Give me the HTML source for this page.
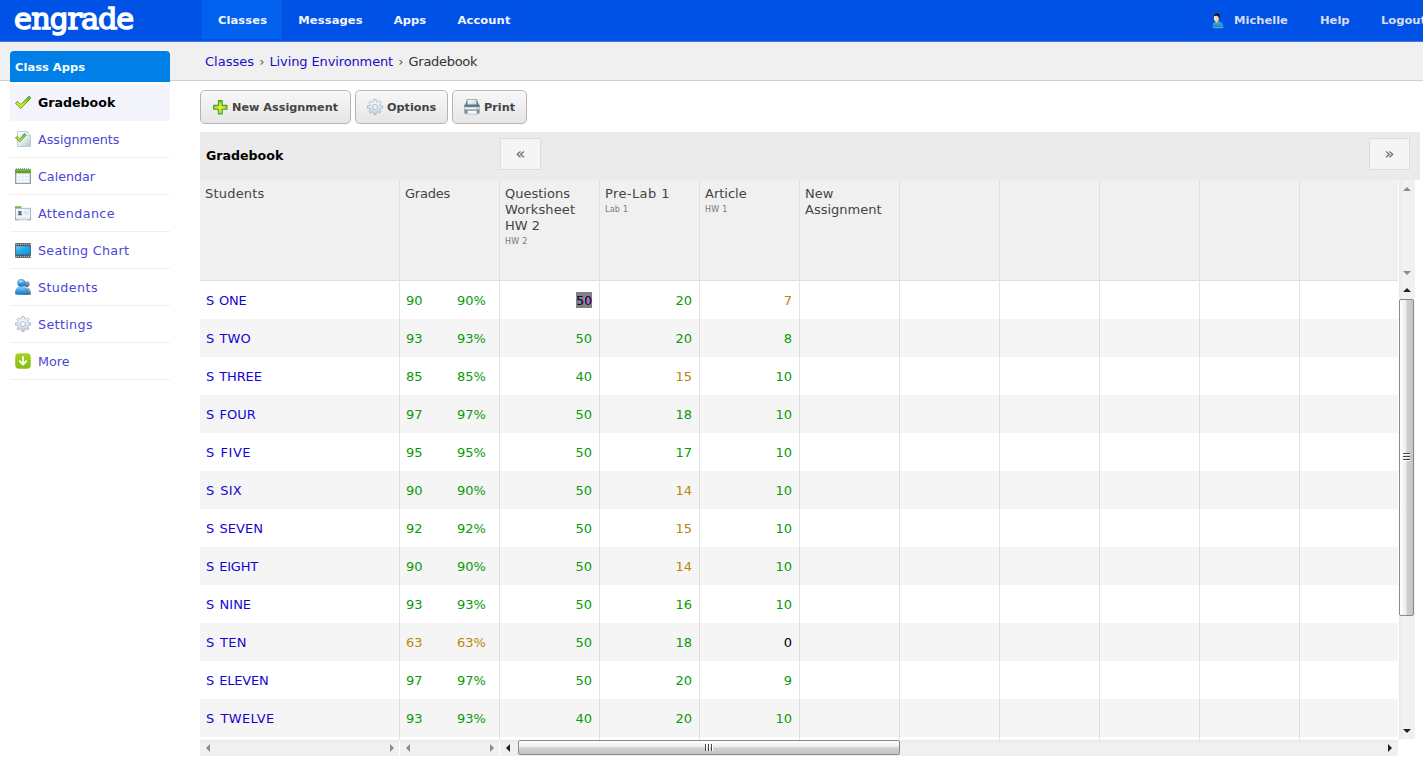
<!DOCTYPE html>
<html><head><meta charset="utf-8"><title>Engrade Gradebook</title>
<style>
*{box-sizing:border-box;margin:0;padding:0}
html,body{width:1423px;height:768px;overflow:hidden;background:#fff}
body{font-family:"DejaVu Sans","Liberation Sans",sans-serif;font-size:13px;color:#333;position:relative}
a{text-decoration:none;color:#1a0dc8}
#hdr{position:absolute;left:0;top:0;width:1423px;height:41px;background:#0052e6;border-bottom:0}
#hdrline{position:absolute;left:0;top:41px;width:1423px;height:1px;background:#3d79e8}
#logo{position:absolute;left:14px;top:-1px;font-weight:normal;font-size:27.5px;letter-spacing:-0.5px;-webkit-text-stroke:1.400px #fff;color:#fff;line-height:41px;white-space:nowrap;transform:scaleX(1.05);transform-origin:0 50%}
#logo b{font:normal 29px 'DejaVu Serif','Liberation Serif',serif;-webkit-text-stroke:1.300px #fff;letter-spacing:-1.1px}
.nav{position:absolute;top:0;height:41px;line-height:41px;color:#f4f6ff;font-weight:bold;font-size:11.5px;letter-spacing:.1px;padding-left:1px;text-align:center;border-right:1px solid #0b4ed8;background:transparent}
.nav.act{background:linear-gradient(#0260ee 0,#0260ee 39px,#0052e6 39px)}
.navr{position:absolute;top:0;height:41px;line-height:41px;color:#d8dcf6;font-weight:bold;font-size:11.5px;border-left:1px solid #0b4ed8;white-space:nowrap}
#crumb{position:absolute;left:0;top:42px;width:1423px;height:39px;background:#f0f0f0;border-bottom:1px solid #cfcfcf}
#crumb .t{position:absolute;left:205px;top:1px;line-height:38px;font-size:13px;color:#333;white-space:nowrap}
#crumb .t i{font-style:normal;color:#555;padding:0 1px}
#side{position:absolute;left:10px;top:51px;width:160px}
#side .hd{height:31px;margin-bottom:2px;background:#0080e6;border-radius:4px 4px 0 0;color:#fff;font-weight:bold;font-size:11.5px;line-height:32px;padding-left:5px}
#side .it{height:37px;line-height:37px;border-bottom:1px solid #efefef;padding-left:28px;font-size:12.7px;position:relative;color:#4a46d6;white-space:nowrap}
#side .it.cur{background:#f4f4fd;color:#000;font-weight:bold;border-bottom-color:#f4f4fd;font-size:12.6px}
#side .ic{position:absolute;left:5px;top:10px;width:16px;height:16px;display:block}
.btn{position:absolute;top:90px;height:34px;border:1px solid #b4b4b4;border-radius:5px;background:linear-gradient(#f8f8f8,#e6e6e6);font-weight:bold;font-size:11.25px;color:#444;line-height:33px;white-space:nowrap;box-shadow:inset 0 1px 0 #fff}
.btn svg{position:absolute;top:8px;width:16px;height:16px}
#gb{position:absolute;left:200px;top:132px;width:1220px;height:48px;background:#ebebeb}
#gb .ti{position:absolute;left:6px;top:0;line-height:48px;font-weight:bold;font-size:12.6px;color:#000}
.pg{position:absolute;top:6px;width:41px;height:32px;background:#f5f5f5;border:1px solid #dcdcdc;text-align:center;line-height:30px;color:#636363;font-size:16px}
#th{position:absolute;left:200px;top:180px;width:1198px;height:101px;background:#f0f0f0;border-bottom:1px solid #dedede}
.col{position:absolute;top:0;height:100px;border-left:1px solid #dfdfdf;padding:6px 0 0 5px;font-size:13px;line-height:16px;color:#444;white-space:nowrap}
.col small{display:block;font-size:8px;line-height:12px;color:#7a7a7a;letter-spacing:.25px;margin-top:2px}
.row{position:absolute;left:200px;width:1198px;height:38px;line-height:40px;background:#fff;font-size:13px}
.row.alt{background:#f5f5f5}
.row span,.row a{position:absolute;top:0;white-space:nowrap}
.nm{left:6px;color:#1505d2;word-spacing:1.200px}
.g1{left:206px}.g2{left:257px}
.sc{text-align:right;width:92px}
.c1{left:300px}.c2{left:400px}.c3{left:500px}
.g{color:#0a9a0a}.o{color:#b8860b}.k{color:#000}
.sel{position:absolute!important;right:0;top:11px!important;width:16px;height:16px;line-height:18px;background:#808080;color:#111;text-align:center;font-size:12.5px;text-shadow:.6px 0 #e0e,-.6px 0 #0dd;overflow:hidden}
.sq{display:inline-block;line-height:normal;transform:scaleY(.88);transform-origin:50% 79.700%}
.vl{position:absolute;top:281px;height:459px;width:1px;background:rgba(0,0,0,.105)}
.sbv{position:absolute;left:1399px;width:16px;background:linear-gradient(90deg,#e9e9e9,#f2f2f2 30%,#f0f0f0)}
.sbh{position:absolute;top:740px;height:16px;background:linear-gradient(#e9e9e9,#f1f1f1 30%,#efefef)}
.tri{position:absolute;width:0;height:0;border:4px solid transparent}
.thumbv{position:absolute;left:0;width:15px;border:1px solid #8a8a8a;border-radius:2px;background:linear-gradient(90deg,#fff,#ececec 45%,#d0d0d4 55%,#c4c4c8)}
.thumbh{position:absolute;top:0;height:15px;border:1px solid #8a8a8a;border-radius:2px;background:linear-gradient(#fff,#ececec 45%,#d0d0d4 55%,#c4c4c8)}
</style></head><body>
<div id="hdr">
 <div id="logo">e<b>n</b>g<b>rad</b>e</div>
 <div class="nav act" style="left:202px;width:81px"><span class="sq">Classes</span></div>
 <div class="nav" style="left:283px;width:95px"><span class="sq">Messages</span></div>
 <div class="nav" style="left:378px;width:64px"><span class="sq">Apps</span></div>
 <div class="nav" style="left:442px;width:84px"><span class="sq">Account</span></div>
 <div class="navr" style="left:1192px;width:111px;padding-left:41px">
  <svg style="position:absolute;left:19px;top:13px" width="13" height="16" viewBox="0 0 13 16"><defs><linearGradient id="ub" x1="0" y1="0" x2="0" y2="1"><stop offset="0" stop-color="#35b9da"/><stop offset="1" stop-color="#118ab5"/></linearGradient><linearGradient id="uf" x1="0" y1="0" x2="1" y2="0"><stop offset="0" stop-color="#fff0e4"/><stop offset="1" stop-color="#eeb28a"/></linearGradient></defs><ellipse cx="6" cy="14" rx="5.600" ry="1.300" fill="#9fb6e6" opacity=".8"/><path d="M.6 13.400C.6 10 2.800 8.600 5.600 8.600s5.600 1.400 5.600 4.800c-2 1.200-8.600 1.200-10.600 0z" fill="url(#ub)"/><path d="M3.600 7h2.600v2.200l-1.300 1-1.300-1z" fill="#e9a77c"/><ellipse cx="4.600" cy="4.800" rx="2.700" ry="3.700" fill="url(#uf)"/><path d="M1.800 3.600C1.700 1.200 3.300.4 5 .4c2.200 0 3.300 1.600 2.900 4.200L7 6.600c.1-2.200-.6-3.800-2.400-3.800-1.300 0-2.200.2-2.800.8z" fill="#15120f"/></svg><span class="sq">Michelle</span></div>
 <div class="navr" style="left:1303px;width:61px;padding-left:16px"><span class="sq">Help</span></div>
 <div class="navr" style="left:1364px;width:59px;padding-left:16px"><span class="sq">Logout</span></div>
</div>
<div id="hdrline"></div>
<div id="crumb"><div class="t"><a>Classes</a> <i>›</i> <a style="letter-spacing:-.12px">Living Environment</a> <i>›</i> <span style="letter-spacing:-.3px">Gradebook</span></div></div>
<div id="side">
 <div class="hd"><span class="sq">Class Apps</span></div>
 <div class="it cur"><svg class="ic" viewBox="0 0 16 16"><defs><linearGradient id="ck1" x1="0" y1="1" x2="1" y2="0"><stop offset="0" stop-color="#f0ee14"/><stop offset=".45" stop-color="#d3e01e"/><stop offset="1" stop-color="#52ad34"/></linearGradient></defs><path d="M.6 9.300L2.500 7.300 5.700 10.500 14.200 2.100 15.600 4.200 5.800 14.500z" fill="url(#ck1)" stroke="#3c9a36" stroke-width=".9" stroke-linejoin="round"/></svg>Gradebook</div>
 <div class="it"><svg class="ic" viewBox="0 0 16 16"><defs><linearGradient id="pgf" x1="0" y1="0" x2="1" y2="1"><stop offset="0" stop-color="#ffffff"/><stop offset=".5" stop-color="#e6edf1"/><stop offset="1" stop-color="#b7c7d1"/></linearGradient><linearGradient id="ck2" x1="0" y1="1" x2="1" y2="0"><stop offset="0" stop-color="#f0ee14"/><stop offset=".5" stop-color="#cfde20"/><stop offset="1" stop-color="#52ad34"/></linearGradient></defs><path d="M2.500 .5h9.500l3.500 4v11h-13z" fill="url(#pgf)" stroke="#b3c3cd" stroke-width=".8"/><path d="M12 .5v4h3.500z" fill="#f7fafb" stroke="#b3c3cd" stroke-width=".6"/><path d="M.5 7L2 5.400 4.800 8.100 9.500 2.600 10.800 4.400 4.800 10.800z" fill="url(#ck2)" stroke="#3c9a36" stroke-width=".9" stroke-linejoin="round"/></svg>Assignments</div>
 <div class="it"><svg class="ic" viewBox="0 0 16 16"><rect x=".6" y="1.600" width="14.800" height="13.800" fill="#dde5ea" stroke="#8497a4" stroke-width="1"/><rect x=".2" y="1.400" width="15.600" height="3.800" fill="#5e9e2c"/><rect x=".2" y="1.400" width="15.600" height="1.500" fill="#7db948"/><path d="M1 .8h14" stroke="#7f8f86" stroke-width="1.200" stroke-dasharray="1 1"/><rect x="2.2" y="6.3" width="2.200" height="2.100" fill="#fff"/><rect x="5.3" y="6.3" width="2.200" height="2.100" fill="#fff"/><rect x="8.4" y="6.3" width="2.200" height="2.100" fill="#fff"/><rect x="11.5" y="6.3" width="2.200" height="2.100" fill="#fff"/><rect x="2.2" y="9.3" width="2.200" height="2.100" fill="#fff"/><rect x="5.3" y="9.3" width="2.200" height="2.100" fill="#fff"/><rect x="8.4" y="9.3" width="2.200" height="2.100" fill="#fff"/><rect x="11.5" y="9.3" width="2.200" height="2.100" fill="#fff"/><rect x="2.2" y="12.3" width="2.200" height="2.100" fill="#fff"/><rect x="5.3" y="12.3" width="2.200" height="2.100" fill="#fff"/><rect x="8.4" y="12.3" width="2.200" height="2.100" fill="#fff"/><rect x="11.5" y="12.3" width="2.200" height="2.100" fill="#fff"/></svg>Calendar</div>
 <div class="it"><svg class="ic" viewBox="0 0 16 16"><rect x="0" y="1.200" width="6.200" height="2.500" fill="#6cb52d"/><rect x="0" y="1.200" width="6.200" height="1" fill="#8fd04a"/><rect x=".5" y="3.300" width="15" height="11.500" fill="#f4f7f9" stroke="#9db1be" stroke-width=".9"/><rect x="2.500" y="5.600" width="4.800" height="4.800" fill="#eaf0f3"/><path d="M3.300 6h3.200v1.800h-.6v1h1v1.400h-4v-1.400h1v-1h-.6z" fill="#556b7a"/><path d="M8.600 6h5.400M8.600 7.500h5.400M8.600 9h5.400" stroke="#d3dde3" stroke-width=".9"/><rect x="2.500" y="12" width="11" height="2.300" fill="#e3eaee"/><path d="M.5 12.500v2.300h2M15.500 12.500v2.300h-2" stroke="#8da2b0" stroke-width=".9" fill="none"/></svg><span style="letter-spacing:.4px">Attendance</span></div>
 <div class="it"><svg class="ic" viewBox="0 0 16 16"><defs><linearGradient id="sg" x1="0" y1="0" x2="1" y2="1"><stop offset="0" stop-color="#8ad8f7"/><stop offset=".35" stop-color="#2fb0ec"/><stop offset="1" stop-color="#0a8fdc"/></linearGradient></defs><rect x=".2" y="1.100" width="15.600" height="14.700" fill="#4b4b4b"/><path d="M.8 2.500h15M.8 14.400h15" stroke="#cfcfcf" stroke-width="1.300" stroke-dasharray="1 1"/><rect x=".9" y="4" width="14.200" height="8.800" fill="url(#sg)" stroke="#1d6fa5" stroke-width=".5"/></svg><span style="letter-spacing:.32px">Seating Chart</span></div>
 <div class="it"><svg class="ic" viewBox="0 0 16 16"><defs><linearGradient id="pg1" x1="0" y1="0" x2="0" y2="1"><stop offset="0" stop-color="#9bd6fa"/><stop offset=".5" stop-color="#3d9fe4"/><stop offset="1" stop-color="#1276c8"/></linearGradient><linearGradient id="pg2" x1="0" y1="0" x2="0" y2="1"><stop offset="0" stop-color="#a9c2d3"/><stop offset="1" stop-color="#3d5f7b"/></linearGradient></defs><circle cx="11.600" cy="5" r="3" fill="url(#pg2)"/><path d="M8 15.500c0-4.500 1.500-7 4-7s3.900 2.500 3.900 7c-1.500.5-6.400.5-7.900 0z" fill="url(#pg2)"/><circle cx="6.300" cy="3.900" r="3.700" fill="url(#pg1)" stroke="#1b74bf" stroke-width=".5"/><path d="M.3 15c0-5 2.200-7.300 6-7.300s6.400 2.300 6.400 7.300c-2 1.100-10.400 1.100-12.400 0z" fill="url(#pg1)" stroke="#1b74bf" stroke-width=".5"/><ellipse cx="5.400" cy="2.600" rx="1.800" ry="1.200" fill="#fff" opacity=".45"/></svg><span style="letter-spacing:.42px">Students</span></div>
 <div class="it"><svg class="ic" viewBox="0 0 16 16"><defs><linearGradient id="gg1" x1="0" y1="0" x2="0" y2="1"><stop offset="0" stop-color="#ffffff"/><stop offset="1" stop-color="#c3d1dc"/></linearGradient></defs><path d="M6.76 2.64L6.81 0.49L9.19 0.49L9.24 2.64L10.91 3.34L12.47 1.85L14.15 3.53L12.66 5.09L13.36 6.76L15.51 6.81L15.51 9.19L13.36 9.24L12.66 10.91L14.15 12.47L12.47 14.15L10.91 12.66L9.24 13.36L9.19 15.51L6.81 15.51L6.76 13.36L5.09 12.66L3.53 14.15L1.85 12.47L3.34 10.91L2.64 9.24L0.49 9.19L0.49 6.81L2.64 6.76L3.34 5.09L1.85 3.53L3.53 1.85L5.09 3.34z" fill="url(#gg1)" stroke="#a7b8c6" stroke-width=".9" stroke-linejoin="round"/><circle cx="8" cy="8" r="2.300" fill="#fff" stroke="#a7b8c6" stroke-width=".9"/></svg><span style="letter-spacing:.35px">Settings</span></div>
 <div class="it"><svg class="ic" viewBox="0 0 16 16"><defs><linearGradient id="mg" x1="0" y1="0" x2="0" y2="1"><stop offset="0" stop-color="#a5d220"/><stop offset="1" stop-color="#86bd12"/></linearGradient></defs><rect x=".2" y=".2" width="15.600" height="15.600" rx="4" fill="url(#mg)"/><path d="M8 4v7.300M4.700 8.200L8 11.500l3.300-3.300" fill="none" stroke="#fff" stroke-width="1.800" stroke-linecap="round" stroke-linejoin="round"/></svg>More</div>
</div>
<div class="btn" style="left:200px;width:151px;padding-left:31px"><svg style="left:12px;top:9px" viewBox="0 0 16 16"><defs><radialGradient id="plg" cx=".5" cy=".55" r=".6"><stop offset="0" stop-color="#f2ee1c"/><stop offset=".55" stop-color="#c5dd25"/><stop offset="1" stop-color="#55b030"/></radialGradient></defs><path d="M5.400 .6h3.800v4.800h4.800v3.800h-4.800v4.800h-3.800v-4.800h-4.800v-3.800h4.800z" fill="url(#plg)" stroke="#3fa23c" stroke-width="1.100" stroke-linejoin="round"/></svg><span class="sq">New Assignment</span></div>
<div class="btn" style="left:355px;width:93px;padding-left:31px"><svg style="left:11px" viewBox="0 0 16 16"><defs><linearGradient id="gg2" x1="0" y1="0" x2="0" y2="1"><stop offset="0" stop-color="#ffffff"/><stop offset="1" stop-color="#c3d1dc"/></linearGradient></defs><path d="M6.76 2.64L6.81 0.49L9.19 0.49L9.24 2.64L10.91 3.34L12.47 1.85L14.15 3.53L12.66 5.09L13.36 6.76L15.51 6.81L15.51 9.19L13.36 9.24L12.66 10.91L14.15 12.47L12.47 14.15L10.91 12.66L9.24 13.36L9.19 15.51L6.81 15.51L6.76 13.36L5.09 12.66L3.53 14.15L1.85 12.47L3.34 10.91L2.64 9.24L0.49 9.19L0.49 6.81L2.64 6.76L3.34 5.09L1.85 3.53L3.53 1.85L5.09 3.34z" fill="url(#gg2)" stroke="#a7b8c6" stroke-width=".9" stroke-linejoin="round"/><circle cx="8" cy="8" r="2.500" fill="#f4f4f4" stroke="#a7b8c6" stroke-width=".9"/></svg><span class="sq">Options</span></div>
<div class="btn" style="left:452px;width:75px;padding-left:31px"><svg style="left:11px" viewBox="0 0 16 16"><defs><linearGradient id="pr1" x1="0" y1="0" x2="1" y2="1"><stop offset="0" stop-color="#ffffff"/><stop offset=".5" stop-color="#e3ebf0"/><stop offset="1" stop-color="#b9c9d3"/></linearGradient><linearGradient id="pr2" x1="0" y1="0" x2="0" y2="1"><stop offset="0" stop-color="#ffffff"/><stop offset="1" stop-color="#dfe7ec"/></linearGradient></defs><path d="M2.200 3.200L3 .6h10l.8 2.600 1.500 3.200H.7z" fill="#5d7686"/><path d="M3.300 .5h9.400v5.500H3.300z" fill="url(#pr1)" stroke="#7f9baa" stroke-width=".6"/><rect x=".3" y="5.800" width="15.400" height="9" rx="1" fill="#7f96a4"/><rect x=".3" y="5.800" width="15.400" height="1.900" rx=".8" fill="#5d7686"/><rect x=".8" y="8.300" width="14.400" height="2.100" fill="#f3f6f8"/><rect x="12" y="8.900" width="2.600" height="1" fill="#f2c645"/><rect x="2.200" y="10.900" width="11.600" height="1.300" fill="#546b7a"/><rect x="3.600" y="11.600" width="9.200" height="4.100" fill="url(#pr2)" stroke="#a9bac6" stroke-width=".5"/></svg><span class="sq">Print</span></div>
<div id="gb"><div class="ti">Gradebook</div><div class="pg" style="left:300px">«</div><div class="pg" style="left:1169px">»</div></div>
<div id="th">
 <div class="col" style="left:0;width:200px;border-left:0"><span style="letter-spacing:.2px">Students</span></div>
 <div class="col" style="left:199px;width:100px"><span style="letter-spacing:-.25px">Grades</span></div>
 <div class="col" style="left:299px;width:100px">Questions<br><span style="letter-spacing:.13px">Worksheet</span><br>HW 2<small>HW 2</small></div>
 <div class="col" style="left:399px;width:100px"><span style="letter-spacing:.4px">Pre-Lab 1</span><small>Lab 1</small></div>
 <div class="col" style="left:499px;width:100px">Article<small>HW 1</small></div>
 <div class="col" style="left:599px;width:100px">New<br>Assignment</div>
 <div class="col" style="left:699px;width:100px"></div>
 <div class="col" style="left:799px;width:100px"></div>
 <div class="col" style="left:899px;width:100px"></div>
 <div class="col" style="left:999px;width:100px"></div>
 <div class="col" style="left:1099px;width:100px"></div>
</div>
<div class="row" style="top:281px"><a class="nm" style="letter-spacing:-0.25px">S ONE</a><span class="g1 g">90</span><span class="g2 g">90%</span><span class="sc c1 g"><span class="sel">50</span></span><span class="sc c2 g">20</span><span class="sc c3 o">7</span></div>
<div class="row alt" style="top:319px"><a class="nm">S TWO</a><span class="g1 g">93</span><span class="g2 g">93%</span><span class="sc c1 g">50</span><span class="sc c2 g">20</span><span class="sc c3 g">8</span></div>
<div class="row" style="top:357px"><a class="nm" style="letter-spacing:-0.15px">S THREE</a><span class="g1 g">85</span><span class="g2 g">85%</span><span class="sc c1 g">40</span><span class="sc c2 o">15</span><span class="sc c3 g">10</span></div>
<div class="row alt" style="top:395px"><a class="nm">S FOUR</a><span class="g1 g">97</span><span class="g2 g">97%</span><span class="sc c1 g">50</span><span class="sc c2 g">18</span><span class="sc c3 g">10</span></div>
<div class="row" style="top:433px"><a class="nm" style="letter-spacing:0.5px">S FIVE</a><span class="g1 g">95</span><span class="g2 g">95%</span><span class="sc c1 g">50</span><span class="sc c2 g">17</span><span class="sc c3 g">10</span></div>
<div class="row alt" style="top:471px"><a class="nm" style="letter-spacing:0.3px">S SIX</a><span class="g1 g">90</span><span class="g2 g">90%</span><span class="sc c1 g">50</span><span class="sc c2 o">14</span><span class="sc c3 g">10</span></div>
<div class="row" style="top:509px"><a class="nm">S SEVEN</a><span class="g1 g">92</span><span class="g2 g">92%</span><span class="sc c1 g">50</span><span class="sc c2 o">15</span><span class="sc c3 g">10</span></div>
<div class="row alt" style="top:547px"><a class="nm" style="letter-spacing:-0.2px">S EIGHT</a><span class="g1 g">90</span><span class="g2 g">90%</span><span class="sc c1 g">50</span><span class="sc c2 o">14</span><span class="sc c3 g">10</span></div>
<div class="row" style="top:585px"><a class="nm">S NINE</a><span class="g1 g">93</span><span class="g2 g">93%</span><span class="sc c1 g">50</span><span class="sc c2 g">16</span><span class="sc c3 g">10</span></div>
<div class="row alt" style="top:623px"><a class="nm" style="letter-spacing:0.27px">S TEN</a><span class="g1 o">63</span><span class="g2 o">63%</span><span class="sc c1 g">50</span><span class="sc c2 g">18</span><span class="sc c3 k">0</span></div>
<div class="row" style="top:661px"><a class="nm" style="letter-spacing:-0.2px">S ELEVEN</a><span class="g1 g">97</span><span class="g2 g">97%</span><span class="sc c1 g">50</span><span class="sc c2 g">20</span><span class="sc c3 g">9</span></div>
<div class="row alt" style="top:699px"><a class="nm" style="letter-spacing:0.4px">S TWELVE</a><span class="g1 g">93</span><span class="g2 g">93%</span><span class="sc c1 g">40</span><span class="sc c2 g">20</span><span class="sc c3 g">10</span></div>
<div class="vl" style="left:399px"></div><div class="vl" style="left:499px"></div><div class="vl" style="left:599px"></div><div class="vl" style="left:699px"></div><div class="vl" style="left:799px"></div><div class="vl" style="left:899px"></div><div class="vl" style="left:999px"></div><div class="vl" style="left:1099px"></div><div class="vl" style="left:1199px"></div><div class="vl" style="left:1299px"></div><div class="vl" style="left:1399px"></div>
<!-- header vertical scrollbar -->
<div class="sbv" style="top:180px;height:101px"><div class="tri" style="left:4px;top:3px;border-bottom:4px solid #8c8c8c"></div><div class="tri" style="left:4px;top:91px;border-top:4px solid #8c8c8c"></div></div>
<!-- body vertical scrollbar -->
<div class="sbv" style="top:281px;height:458px"><div class="tri" style="left:4px;top:3px;border-bottom:4px solid #222"></div><div class="thumbv" style="top:18px;height:317px"></div>
 <div style="position:absolute;left:4px;top:172px;width:7px;height:8px;background:linear-gradient(#444 0 1px,#fff 1px 2px,transparent 2px 3px,#444 3px 4px,#fff 4px 5px,transparent 5px 6px,#444 6px 7px,#fff 7px 8px)"></div>
 <div class="tri" style="left:4px;top:448px;border-top:4px solid #222"></div></div>
<!-- horizontal scrollbars -->
<div class="sbh" style="left:200px;width:199px"><div class="tri" style="left:2px;top:4px;border-right:4px solid #8c8c8c"></div><div class="tri" style="left:190px;top:4px;border-left:4px solid #8c8c8c"></div></div>
<div class="sbh" style="left:400px;width:99px"><div class="tri" style="left:2px;top:4px;border-right:4px solid #8c8c8c"></div><div class="tri" style="left:90px;top:4px;border-left:4px solid #8c8c8c"></div></div>
<div class="sbh" style="left:500px;width:898px"><div class="tri" style="left:2px;top:4px;border-right:4px solid #222"></div><div class="thumbh" style="left:18px;width:382px"></div>
 <div style="position:absolute;left:205px;top:4px;width:8px;height:7px;background:linear-gradient(90deg,#444 0 1px,#fff 1px 2px,transparent 2px 3px,#444 3px 4px,#fff 4px 5px,transparent 5px 6px,#444 6px 7px,#fff 7px 8px)"></div>
 <div class="tri" style="left:888px;top:4px;border-left:4px solid #222"></div></div>
</body></html>
